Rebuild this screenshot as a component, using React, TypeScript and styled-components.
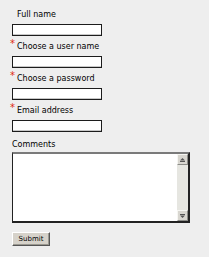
import React from "react";
import styled, { createGlobalStyle } from "styled-components";

const Global = createGlobalStyle`
  html, body { margin: 0; padding: 0; background: #eeeeee; }
  body { font-family: "DejaVu Sans", Verdana, sans-serif; }
`;

const Form = styled.form`
  display: flex;
  flex-direction: column;
  align-items: flex-start;
  padding: 10px 0 0 12px;
  width: 209px;
  height: 257px;
  box-sizing: border-box;
`;

const Field = styled.div`
  display: flex;
  flex-direction: column;
  align-items: flex-start;
  gap: 4px;
  margin-bottom: 6px;
`;

const Label = styled.label<{ $indent?: boolean }>`
  display: flex;
  align-items: flex-start;
  height: 10px;
  font-size: 8px;
  line-height: 10px;
  color: #000;
  margin-left: ${(p) => (p.$indent ? "-2px" : "0")};
`;

const StarSlot = styled.span`
  display: block;
  width: 7px;
  height: 10px;
  font-size: 10px;
  line-height: 10px;
  color: #e02a10;
  margin-top: -3px;
`;

const Input = styled.input`
  box-sizing: border-box;
  width: 90px;
  height: 12px;
  margin: 0;
  padding: 0 2px;
  background: #fff;
  border: 1px solid #1c1c1c;
  box-shadow: inset 0 -1px 0 #c8c8c8;
  font-size: 8px;
  outline: none;
`;

const CommentsLabel = styled.label`
  display: block;
  height: 10px;
  font-size: 8px;
  line-height: 10px;
  color: #000;
  margin-top: 2px;
  margin-bottom: 2px;
`;

const AreaBox = styled.div`
  box-sizing: border-box;
  display: flex;
  width: 178px;
  height: 71px;
  background: #fff;
  border-top: 2px solid #7a7a7a;
  border-left: 1px solid #222;
  border-right: 2px solid #222;
  border-bottom: 2px solid #222;
`;

const Area = styled.textarea`
  flex: 1;
  border: none;
  margin: 0;
  padding: 2px;
  resize: none;
  overflow: hidden;
  font-size: 8px;
  outline: none;
  background: #fff;
`;

const Scrollbar = styled.div`
  display: flex;
  flex-direction: column;
  width: 11px;
  background: #e6e6e1;
`;

const ScrollButton = styled.div`
  box-sizing: border-box;
  width: 11px;
  height: 11px;
  display: flex;
  align-items: center;
  justify-content: center;
  background: #d8d6d0;
  border-top: 1px solid #f6f6f2;
  border-left: 1px solid #f6f6f2;
  border-right: 1px solid #8c8c88;
  border-bottom: 1px solid #8c8c88;
`;

const Track = styled.div`
  flex: 1;
  background: #e6e6e1;
`;

const Submit = styled.button`
  box-sizing: border-box;
  margin-top: 9px;
  width: 38px;
  height: 14px;
  padding: 0;
  font-family: "DejaVu Sans", Verdana, sans-serif;
  font-size: 7px;
  line-height: 10px;
  color: #000;
  background: #d6d2ca;
  border-top: 1px solid #ffffff;
  border-left: 1px solid #ffffff;
  border-right: 1px solid #555;
  border-bottom: 1px solid #555;
  box-shadow: inset -1px -1px 0 #9a9890;
`;

const Arrow = ({ up }: { up?: boolean }) => (
  <svg width="5" height="4" viewBox="0 0 5 4">
    {up ? (
      <>
        <path d="M2.5 0 L5 2.5 L0 2.5 Z" fill="#555" />
        <rect x="0" y="3" width="5" height="1" fill="#555" />
      </>
    ) : (
      <>
        <rect x="0" y="0" width="5" height="1" fill="#555" />
        <path d="M0 1.5 L5 1.5 L2.5 4 Z" fill="#555" />
      </>
    )}
  </svg>
);

const TextField = ({ label, required }: { label: string; required?: boolean }) => (
  <Field>
    <Label $indent>
      <StarSlot>{required ? "*" : ""}</StarSlot>
      {label}
    </Label>
    <Input type="text" />
  </Field>
);

export default function App() {
  return (
    <>
      <Global />
      <Form onSubmit={(e) => e.preventDefault()}>
        <TextField label="Full name" />
        <TextField label="Choose a user name" required />
        <TextField label="Choose a password" required />
        <TextField label="Email address" required />
        <CommentsLabel>Comments</CommentsLabel>
        <AreaBox>
          <Area />
          <Scrollbar>
            <ScrollButton>
              <Arrow up />
            </ScrollButton>
            <Track />
            <ScrollButton>
              <Arrow />
            </ScrollButton>
          </Scrollbar>
        </AreaBox>
        <Submit type="submit">Submit</Submit>
      </Form>
    </>
  );
}
